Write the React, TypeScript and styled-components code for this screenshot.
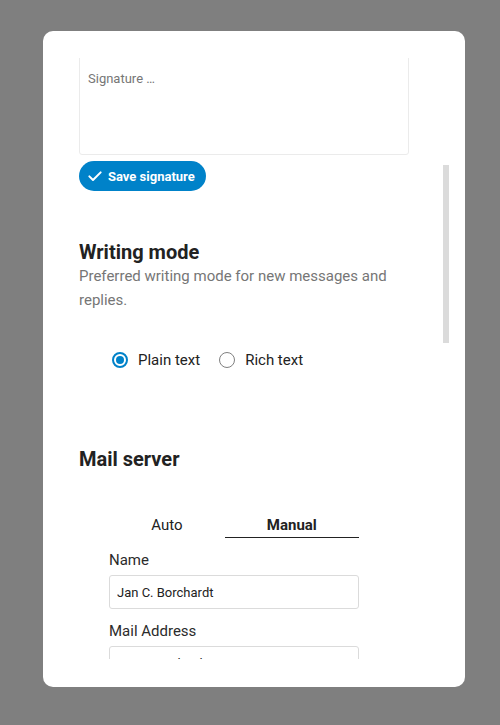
import React from "react";
import styled, { createGlobalStyle } from "styled-components";

const GlobalStyle = createGlobalStyle`
  html, body { margin: 0; padding: 0; }
  body {
    background: #7f7f7f;
    font-family: Roboto, "Liberation Sans", Arial, sans-serif;
    color: #222222;
  }
  * { box-sizing: border-box; }
`;

const Backdrop = styled.div`
  width: 500px;
  height: 725px;
  background: #7f7f7f;
  padding: 31px 35px 38px 43px;
  display: flex;
`;

const Modal = styled.div`
  position: relative;
  width: 422px;
  height: 656px;
  background: #ffffff;
  border-radius: 10px;
  padding: 27px 0 28px 36px;
`;

const Viewport = styled.div`
  width: 330px;
  height: 601px;
  overflow: hidden;
  display: flex;
  flex-direction: column;
`;

const ScrollThumb = styled.div`
  position: absolute;
  left: 400px;
  top: 134px;
  width: 6px;
  height: 178px;
  background: #dbdbdb;
`;

const SignatureArea = styled.textarea`
  flex: none;
  width: 330px;
  height: 107px;
  margin-top: -10px;
  padding: 21px 8px 8px;
  border: 1px solid #ebebeb;
  border-radius: 3px;
  resize: none;
  outline: none;
  font-family: Roboto, "Liberation Sans", Arial, sans-serif;
  font-size: 13px;
  line-height: 18px;
  color: #222;
  &::placeholder { color: #767676; }
`;

const PrimaryButton = styled.button`
  flex: none;
  align-self: flex-start;
  margin-top: 6px;
  height: 30px;
  width: 127px;
  display: flex;
  align-items: center;
  gap: 5px;
  padding: 0 0 0 8px;
  border: none;
  border-radius: 15px;
  background: #0082c9;
  color: #ffffff;
  font-family: Roboto, "Liberation Sans", Arial, sans-serif;
  font-size: 13px;
  font-weight: 700;
`;

const SectionTitle = styled.h2<{ $gap: number }>`
  margin: ${(p) => p.$gap}px 0 0;
  font-size: 20px;
  line-height: 24px;
  font-weight: 700;
  color: #222222;
`;

const Description = styled.p`
  margin: 0;
  font-size: 15px;
  line-height: 24px;
  color: #767676;
`;

const RadioGroup = styled.div`
  margin: 36px 0 0 33px;
  display: flex;
  align-items: center;
  gap: 19px;
  height: 24px;
`;

const RadioOption = styled.label`
  display: flex;
  align-items: center;
  gap: 10px;
  font-size: 15px;
  line-height: 24px;
  color: #222222;
`;

const RadioCircle = styled.span<{ $checked?: boolean }>`
  width: 16px;
  height: 16px;
  border-radius: 50%;
  border: ${(p) => (p.$checked ? "2px solid #0082c9" : "1.3px solid #808080")};
  display: flex;
  align-items: center;
  justify-content: center;
  &::after {
    content: "";
    width: 8px;
    height: 8px;
    border-radius: 50%;
    background: ${(p) => (p.$checked ? "#0082c9" : "transparent")};
  }
`;

const Tabs = styled.div`
  margin: 39px 0 0 30px;
  width: 250px;
  display: flex;
`;

const Tab = styled.div<{ $active?: boolean }>`
  flex: 1 1 auto;
  text-align: center;
  height: 28px;
  line-height: 31px;
  font-size: 15px;
  font-weight: ${(p) => (p.$active ? 700 : 400)};
  color: #222222;
  border-bottom: 1px solid ${(p) => (p.$active ? "#222222" : "transparent")};
`;

const Form = styled.div`
  margin-left: 30px;
  width: 250px;
  display: flex;
  flex-direction: column;
`;

const FieldLabel = styled.label`
  margin-top: 12px;
  font-size: 15px;
  line-height: 20px;
  color: #2b2b2b;
`;

const TextInput = styled.input`
  flex: none;
  margin-top: 5px;
  width: 250px;
  height: 34px;
  padding: 0 7px;
  border: 1px solid #dbdbdb;
  border-radius: 3px;
  outline: none;
  font-family: Roboto, "Liberation Sans", Arial, sans-serif;
  font-size: 13px;
  color: #222222;
  background: #ffffff;
`;

const CheckIcon = () => (
  <svg width="16" height="16" viewBox="0 0 24 24" fill="none">
    <path d="M3.5 12.5l5.5 5.5L20.5 6.5" stroke="#ffffff" strokeWidth="3" strokeLinecap="round" strokeLinejoin="round" />
  </svg>
);

export default function App() {
  return (
    <>
      <GlobalStyle />
      <Backdrop>
        <Modal>
          <Viewport>
            <SignatureArea placeholder="Signature …" />
            <PrimaryButton>
              <CheckIcon />
              Save signature
            </PrimaryButton>

            <SectionTitle $gap={49}>Writing mode</SectionTitle>
            <Description>Preferred writing mode for new messages and replies.</Description>
            <RadioGroup>
              <RadioOption>
                <RadioCircle $checked />
                Plain text
              </RadioOption>
              <RadioOption>
                <RadioCircle />
                Rich text
              </RadioOption>
            </RadioGroup>

            <SectionTitle $gap={75}>Mail server</SectionTitle>
            <Tabs>
              <Tab>Auto</Tab>
              <Tab $active>Manual</Tab>
            </Tabs>
            <Form>
              <FieldLabel>Name</FieldLabel>
              <TextInput defaultValue="Jan C. Borchardt" />
              <FieldLabel>Mail Address</FieldLabel>
              <TextInput defaultValue="jan@nextcloud.com" />
            </Form>
          </Viewport>
          <ScrollThumb />
        </Modal>
      </Backdrop>
    </>
  );
}
